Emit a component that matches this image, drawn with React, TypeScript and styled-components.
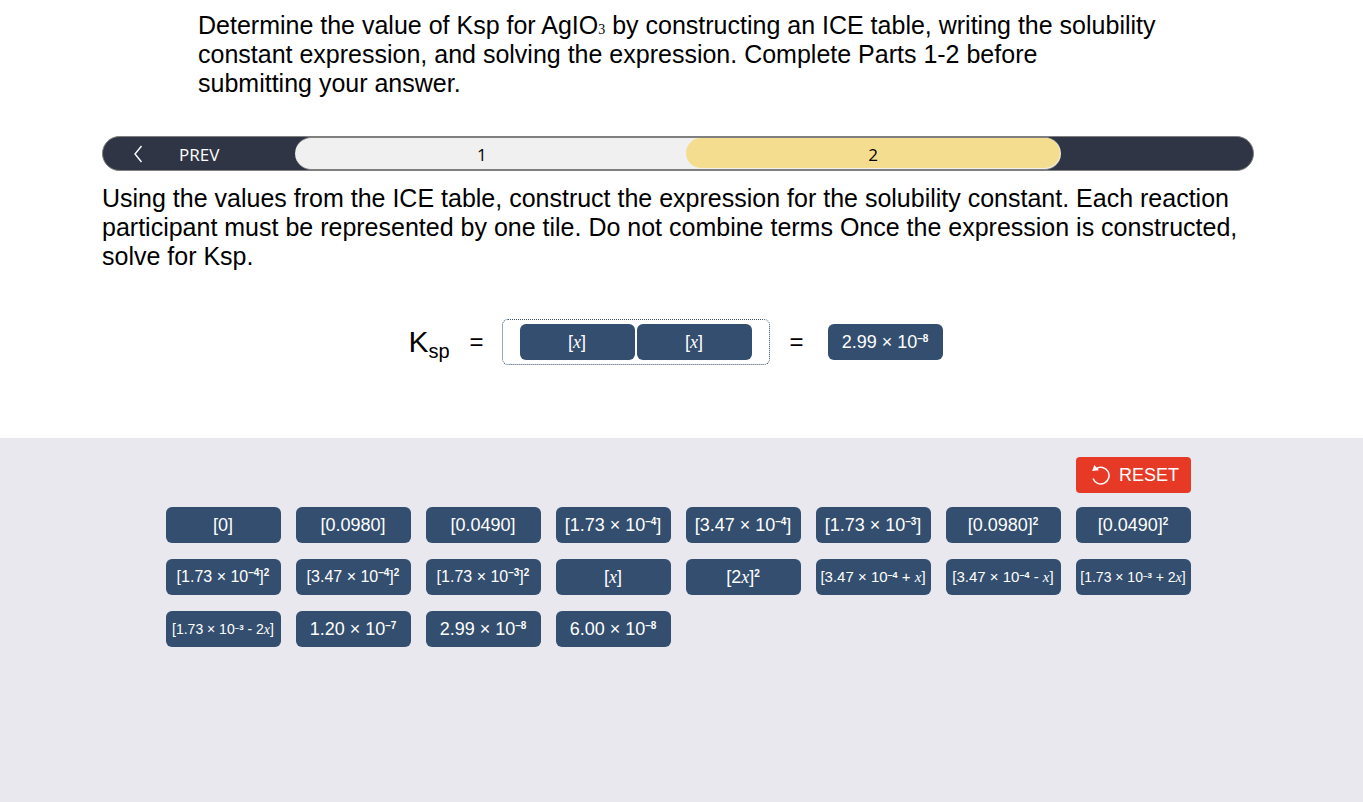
import React from "react";
import styled, { createGlobalStyle } from "styled-components";

const GlobalStyle = createGlobalStyle`
  *, *::before, *::after { box-sizing: border-box; }
  body {
    margin: 0;
    background: #fff;
    color: #000;
    font-family: "Liberation Sans", Arial, sans-serif;
  }
`;

const Page = styled.div`
  min-height: 100vh;
  display: flex;
  flex-direction: column;
`;

const Workspace = styled.main`
  padding: 11px 109px 73px 102px;
`;

const Copy = styled.p<{ $inset?: boolean }>`
  margin: 0;
  padding: ${({ $inset }) => ($inset ? "0 96px" : "0")};
  font-size: 25px;
  line-height: 29px;
`;

const Formula = styled.sub`
  font-family: "Liberation Serif", "Times New Roman", serif;
  font-size: 14px;
  line-height: 14px;
  vertical-align: baseline;
`;

const StepBar = styled.nav`
  display: grid;
  grid-template-columns: 1fr 4fr 1fr;
  height: 35px;
  margin: 38px 0 13px;
  border: 1px solid #7f7f7f;
  border-radius: 18px;
  background: #2f3545;
  overflow: hidden;
  font-family: "Open Sans", "Segoe UI", sans-serif;
  font-size: 17px;
`;

const PrevButton = styled.button`
  display: flex;
  align-items: center;
  gap: 36px;
  padding: 1px 0 0 30px;
  border: 0;
  background: transparent;
  color: #fff;
  font: inherit;
`;

const Track = styled.div`
  display: grid;
  grid-template-columns: 1fr 1fr;
  gap: 16px;
  border: solid #7f7f7f;
  border-width: 1px 0;
  background: #f0f0f0;
  border-radius: 17px;
`;

const StepButton = styled.button<{ $active?: boolean }>`
  margin: 0 1px 1px 0;
  padding: 3px 0 0;
  border: 0;
  border-radius: 16px;
  background: ${({ $active }) => ($active ? "#f5dd90" : "transparent")};
  color: #000;
  font: inherit;
`;

const Equation = styled.div`
  display: flex;
  align-items: center;
  justify-content: center;
  margin: 48px 5px 0 0;
`;

const Constant = styled.span`
  font-size: 30px;
  line-height: 36px;

  sub {
    font-size: 20px;
    line-height: 20px;
    vertical-align: -6px;
  }
`;

const Equals = styled.span`
  padding: 0 18px 0 20px;
  font-size: 24px;
  line-height: 34px;
`;

const DropZone = styled.div`
  display: flex;
  gap: 2px;
  padding: 4px 17px;
  border: 1px dotted #334e6e;
  border-radius: 6px;
`;

const Tile = styled.button<{ $size?: number }>`
  width: 115px;
  height: 36px;
  padding: 0;
  border: 0;
  border-radius: 6px;
  background: #334e6e;
  color: #fff;
  font-family: inherit;
  font-size: ${({ $size = 18 }) => $size}px;
  line-height: 20px;
  white-space: nowrap;

  i {
    font-family: "Liberation Serif", "Times New Roman", serif;
  }
`;

const Power = styled.sup<{ $size: number }>`
  font-size: ${({ $size }) => $size}px;
  font-weight: 700;
  line-height: 8px;
  vertical-align: ${({ $size }) => ($size < 10 ? 4 : 6)}px;
`;

const Result = styled.div`
  margin-left: 6px;
`;

const Pool = styled.section`
  flex: 1;
  padding: 19px 109px 40px 102px;
  background: #e9e8ee;
`;

const TileGrid = styled.div`
  display: grid;
  grid-template-columns: repeat(auto-fit, 115px);
  justify-content: center;
  gap: 16px 15px;
  max-width: 1025px;
  margin: 0 auto;
`;

const PoolHeader = styled.div`
  display: flex;
  justify-content: flex-end;
  max-width: 1025px;
  margin: 0 auto 14px;
`;

const ResetButton = styled.button`
  display: flex;
  align-items: center;
  justify-content: center;
  gap: 8px;
  width: 115px;
  height: 36px;
  padding: 0 0 0 4px;
  border: 0;
  border-radius: 4px;
  background: #e63a26;
  color: #fff;
  font-family: inherit;
  font-size: 18px;
`;

type Term = {
  lead: string;
  exp?: string;
  variable?: boolean;
  mid?: string;
  tail?: string;
  squared?: boolean;
  size?: number;
};

const terms: Term[] = [
  { lead: "[0]" },
  { lead: "[0.0980]" },
  { lead: "[0.0490]" },
  { lead: "[1.73 × 10", exp: "–4", tail: "]" },
  { lead: "[3.47 × 10", exp: "–4", tail: "]" },
  { lead: "[1.73 × 10", exp: "–3", tail: "]" },
  { lead: "[0.0980]", squared: true },
  { lead: "[0.0490]", squared: true },
  { lead: "[1.73 × 10", exp: "–4", tail: "]", squared: true, size: 16 },
  { lead: "[3.47 × 10", exp: "–4", tail: "]", squared: true, size: 16 },
  { lead: "[1.73 × 10", exp: "–3", tail: "]", squared: true, size: 16 },
  { lead: "[", variable: true, tail: "]" },
  { lead: "[2", variable: true, tail: "]", squared: true },
  { lead: "[3.47 × 10", exp: "–4", mid: " + ", variable: true, tail: "]", size: 15 },
  { lead: "[3.47 × 10", exp: "–4", mid: " - ", variable: true, tail: "]", size: 15 },
  { lead: "[1.73 × 10", exp: "–3", mid: " + 2", variable: true, tail: "]", size: 14 },
  { lead: "[1.73 × 10", exp: "–3", mid: " - 2", variable: true, tail: "]", size: 14 },
  { lead: "1.20 × 10", exp: "–7" },
  { lead: "2.99 × 10", exp: "–8" },
  { lead: "6.00 × 10", exp: "–8" },
];

const powerSizes: Record<number, number> = { 14: 8, 15: 9, 16: 10, 18: 10 };

function TermTile({ term }: { term: Term }) {
  const powerSize = powerSizes[term.size ?? 18];
  return (
    <Tile type="button" $size={term.size}>
      {term.lead}
      {term.exp && <Power $size={powerSize}>{term.exp}</Power>}
      {term.mid}
      {term.variable && <i>x</i>}
      {term.tail}
      {term.squared && <Power $size={powerSize}>2</Power>}
    </Tile>
  );
}

const variableTerm: Term = { lead: "[", variable: true, tail: "]" };

export default function App() {
  return (
    <Page>
      <GlobalStyle />
      <Workspace>
        <Copy $inset>
          Determine the value of Ksp for AgIO<Formula>3</Formula> by constructing an ICE table,
          writing the solubility constant expression, and solving the expression. Complete Parts
          1-2 before submitting your answer.
        </Copy>
        <StepBar aria-label="Parts">
          <PrevButton type="button">
            <svg width="10" height="18" viewBox="0 0 10 18" fill="none" stroke="#fff" strokeWidth="1.4" aria-hidden="true">
              <path d="M8.5 1 2 9l6.5 8" />
            </svg>
            PREV
          </PrevButton>
          <Track>
            <StepButton type="button">1</StepButton>
            <StepButton type="button" $active aria-current="step">2</StepButton>
          </Track>
        </StepBar>
        <Copy>
          Using the values from the ICE table, construct the expression for the solubility
          constant. Each reaction participant must be represented by one tile. Do not combine
          terms Once the expression is constructed, solve for Ksp.
        </Copy>
        <Equation>
          <Constant>K<sub>sp</sub></Constant>
          <Equals>=</Equals>
          <DropZone>
            <TermTile term={variableTerm} />
            <TermTile term={variableTerm} />
          </DropZone>
          <Equals>=</Equals>
          <Result>
            <TermTile term={{ lead: "2.99 × 10", exp: "–8" }} />
          </Result>
        </Equation>
      </Workspace>
      <Pool aria-label="Tiles">
        <PoolHeader>
          <ResetButton type="button">
            <svg width="20" height="20" viewBox="0 0 20 20" fill="none" aria-hidden="true">
              <path d="M5 3.8A8.3 8.3 0 1 1 2 13.6" stroke="#fff" strokeWidth="1.5" />
              <path d="M3.3 0 8 5.2 1.2 6Z" fill="#fff" />
            </svg>
            RESET
          </ResetButton>
        </PoolHeader>
        <TileGrid>
          {terms.map((term, index) => (
            <TermTile key={index} term={term} />
          ))}
        </TileGrid>
      </Pool>
    </Page>
  );
}
